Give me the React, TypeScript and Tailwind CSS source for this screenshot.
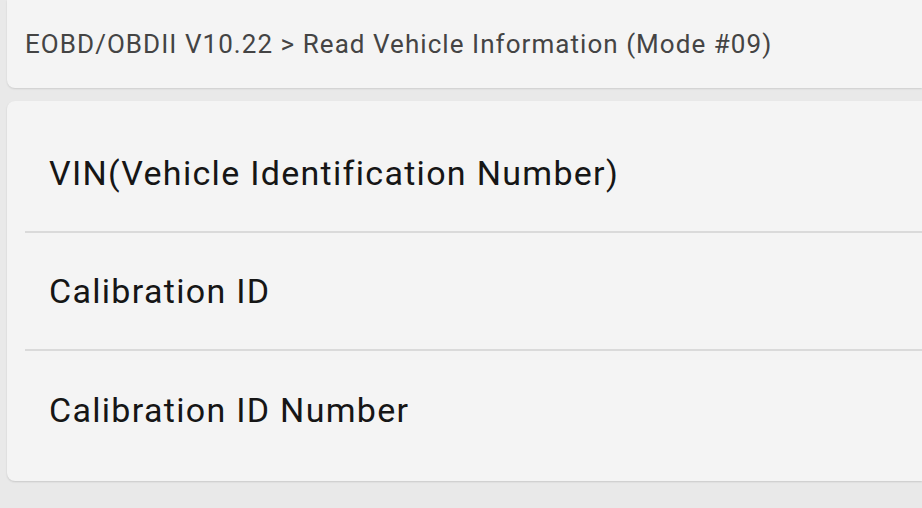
const ITEMS = [
  "VIN(Vehicle Identification Number)",
  "Calibration ID",
  "Calibration ID Number",
];

export default function App() {
  return (
    <div
      className="flex h-[508px] w-[922px] flex-col overflow-hidden bg-[#e9e9e9] pl-[7px]"
      style={{ fontFamily: "Roboto, 'Noto Sans', sans-serif" }}
    >
      <div className="flex h-[88px] shrink-0 items-center rounded-bl-lg bg-[#f4f4f4] pl-[18px] shadow-[0_1px_2px_rgba(0,0,0,0.12)]">
        <p className="whitespace-nowrap text-[26px] leading-none tracking-[1.05px] text-[#444444]">
          EOBD/OBDII V10.22 &gt; Read Vehicle Information (Mode #09)
        </p>
      </div>

      <div className="mt-[13px] flex h-[380px] shrink-0 flex-col rounded-l-lg bg-[#f4f4f4] pt-[14px] pb-[12px] pl-[18px] shadow-[0_1px_2px_rgba(0,0,0,0.14)]">
        {ITEMS.map((label, i) => (
          <div
            key={label}
            className={
              i < ITEMS.length - 1
                ? "flex h-[118px] items-center border-b-2 border-[#dadada] pl-[24px]"
                : "flex h-[118px] items-center pl-[24px]"
            }
          >
            <span className="whitespace-nowrap text-[34px] leading-none tracking-[1.3px] text-[#161616]">
              {label}
            </span>
          </div>
        ))}
      </div>
    </div>
  );
}
